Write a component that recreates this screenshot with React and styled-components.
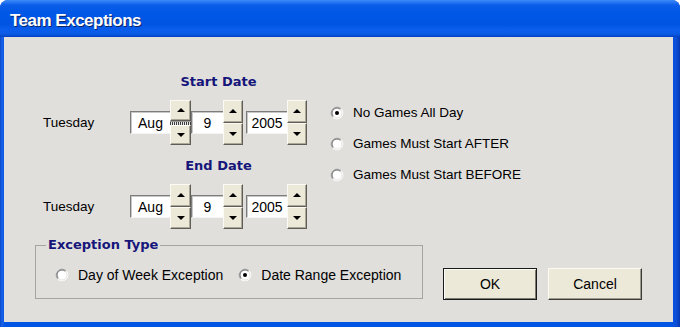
import React from 'react';
import styled, { createGlobalStyle } from 'styled-components';

const GlobalStyle = createGlobalStyle`
  html, body { margin: 0; padding: 0; background: #fff; }
  body {
    width: 680px; height: 327px; overflow: hidden;
    font-family: "Liberation Sans", Arial, sans-serif;
  }
`;

const Window = styled.div`
  width: 680px;
  height: 327px;
  display: flex;
  flex-direction: column;
  background: linear-gradient(to right, #0a48c8 0, #1a62e8 2px, #0055e5 5px, #0055e5 670px, #0b4fd8 676px, #0638b0 680px);
  border-radius: 8px 8px 0 0;
  overflow: hidden;
`;

const TitleBar = styled.div`
  height: 37px;
  flex: none;
  box-sizing: border-box;
  display: flex;
  align-items: center;
  padding: 5px 0 0 10px;
  background: linear-gradient(to bottom,
    #3d8af7 0px, #2a7af5 2px, #0b5ee9 5px, #0058e6 12px,
    #0054e2 24px, #0a5eeb 30px, #0b5ae4 34px, #0041c0 37px);
  color: #fff;
  font: bold 17px "Liberation Sans", Arial, sans-serif;
  letter-spacing: -0.5px;
  text-shadow: 1px 1px 0 #0a246a;
`;

const Body = styled.div`
  flex: 1;
  margin: 0 7px 5px 4px;
  background: #e0dfdc;
  box-sizing: border-box;
  padding-top: 37px;
  display: flex;
  flex-direction: column;
  font-size: 13.5px;
  color: #000;
`;

const TopRow = styled.div`
  display: flex;
  padding-left: 39px;
`;

const DateColumn = styled.div`
  width: 287px;
  flex: none;
  display: flex;
  flex-direction: column;
`;

const DateSection = styled.div`
  margin-top: ${p => p.$top || 0}px;
  display: flex;
  flex-direction: column;
`;

const SectionHeader = styled.div`
  margin-left: 87px;
  width: 177px;
  text-align: center;
  font: bold 13px "DejaVu Sans", Verdana, sans-serif;
  line-height: 16px;
  color: #15157a;
  margin-bottom: 10px;
`;

const DateRow = styled.div`
  display: flex;
  align-items: center;
  height: 45px;
`;

const DayLabel = styled.div`
  width: 87px;
  flex: none;
`;

const SpinGroup = styled.div`
  display: flex;
  align-items: center;
`;

const Field = styled.div`
  width: ${p => p.$w}px;
  margin-left: ${p => p.$gap || 0}px;
  height: 23px;
  box-sizing: border-box;
  background: #fff;
  border-style: solid;
  border-width: 1px 0 1px 1px;
  border-color: #7c7c7c #fff #f4f4f4 #7c7c7c;
  box-shadow: inset 1px 1px 0 #c8c8c8;
  display: flex;
  align-items: center;
  justify-content: center;
  font-size: 14px;
  line-height: 1;
`;

const SpinStack = styled.div`
  width: ${p => p.$w}px;
  height: 45px;
  display: flex;
  flex-direction: column;
`;

const SpinButton = styled.div`
  flex: 1;
  box-sizing: border-box;
  background: #ece9d8;
  border: 1px solid;
  border-color: #fbfaf5 #5f5d55 #5f5d55 #fbfaf5;
  box-shadow: inset -1px -1px 0 #aca899;
  display: flex;
  align-items: center;
  justify-content: center;
`;

const FocusBand = styled.div`
  height: 4px;
  flex: none;
  background:
    repeating-linear-gradient(90deg, #3c3c3c 0 1px, #e8e8e8 1px 2px);
  border-top: 1px solid #9a9a9a;
  box-sizing: border-box;
`;

const Arrow = ({ down }) => (
  <svg width="8" height="4" viewBox="0 0 8 4">
    {down
      ? <polygon points="0,0 8,0 4,4" fill="#000" />
      : <polygon points="0,4 4,0 8,4" fill="#000" />}
  </svg>
);

const Spinner = ({ w, focused }) => (
  <SpinStack $w={w}>
    <SpinButton><Arrow /></SpinButton>
    {focused && <FocusBand />}
    <SpinButton><Arrow down /></SpinButton>
  </SpinStack>
);

const DateSpinners = ({ focused }) => (
  <SpinGroup>
    <Field $w={40}>Aug</Field>
    <Spinner w={21} focused={focused} />
    <Field $w={32}>9</Field>
    <Spinner w={20} />
    <Field $w={41} $gap={3}>2005</Field>
    <Spinner w={20} />
  </SpinGroup>
);

const RadioColumn = styled.div`
  margin-top: 23px;
  display: flex;
  flex-direction: column;
`;

const RadioOption = styled.label`
  display: flex;
  align-items: center;
  gap: 9px;
  height: ${p => p.$h || 31}px;
  margin-right: ${p => p.$after || 0}px;
  white-space: nowrap;
`;

const RadioSvg = styled.svg`
  width: 14px;
  height: 14px;
  flex: none;
`;

const RadioMark = ({ checked }) => (
  <RadioSvg viewBox="0 0 14 14">
    <circle cx="7" cy="7" r="6" fill="#fff" />
    <path d="M2.76 11.24 A6 6 0 0 1 11.24 2.76" stroke="#a6a6a6" fill="none" strokeWidth="1" />
    <path d="M3.46 10.54 A5 5 0 0 1 10.54 3.46" stroke="#6c6c6c" fill="none" strokeWidth="1" />
    <path d="M11.24 2.76 A6 6 0 0 1 2.76 11.24" stroke="#ffffff" fill="none" strokeWidth="1" />
    <path d="M10.54 3.46 A5 5 0 0 1 3.46 10.54" stroke="#e4e2dc" fill="none" strokeWidth="1" />
    {checked && <circle cx="7" cy="7" r="2" fill="#000" />}
  </RadioSvg>
);

const BottomRow = styled.div`
  display: flex;
  align-items: flex-end;
  padding-left: 31px;
  margin-top: 8px;
`;

const GroupBox = styled.fieldset`
  margin: 0 0 1px 0;
  width: 388px;
  box-sizing: border-box;
  min-inline-size: 0;
  padding: 14px 10px 15px 10px;
  border: 1px solid #a4a4a4;
`;

const Legend = styled.legend`
  padding: 0 2px;
  font: bold 13px "DejaVu Sans", Verdana, sans-serif;
  line-height: 16px;
  color: #15157a;
`;

const GroupRow = styled.div`
  display: flex;
  align-items: center;
  margin-left: 9px;
  font-size: 14px;
`;

const ButtonRow = styled.div`
  display: flex;
  gap: 11px;
  margin-left: 20px;
`;

const DialogButton = styled.button`
  width: 94px;
  height: 32px;
  box-sizing: border-box;
  padding: 0;
  background: #ece9d8;
  font: 14px "Liberation Sans", Arial, sans-serif;
  color: #000;
  border: 1px solid;
  border-color: ${p => p.$default ? '#1a1a1a' : '#fbfaf5 #3c3b36 #3c3b36 #fbfaf5'};
  box-shadow: ${p => p.$default
    ? 'inset 1px 1px 0 #fbfaf5, inset -1px -1px 0 #7d7b70'
    : 'inset -1px -1px 0 #9d9b90'};
`;

export default function App() {
  return (
    <>
      <GlobalStyle />
      <Window>
        <TitleBar>Team Exceptions</TitleBar>
        <Body>
          <TopRow>
            <DateColumn>
              <DateSection>
                <SectionHeader>Start Date</SectionHeader>
                <DateRow>
                  <DayLabel>Tuesday</DayLabel>
                  <DateSpinners focused />
                </DateRow>
              </DateSection>
              <DateSection $top={13}>
                <SectionHeader>End Date</SectionHeader>
                <DateRow>
                  <DayLabel>Tuesday</DayLabel>
                  <DateSpinners />
                </DateRow>
              </DateSection>
            </DateColumn>
            <RadioColumn>
              <RadioOption><RadioMark checked />No Games All Day</RadioOption>
              <RadioOption><RadioMark />Games Must Start AFTER</RadioOption>
              <RadioOption><RadioMark />Games Must Start BEFORE</RadioOption>
            </RadioColumn>
          </TopRow>
          <BottomRow>
            <GroupBox>
              <Legend>Exception Type</Legend>
              <GroupRow>
                <RadioOption $h={16} $after={15}><RadioMark />Day of Week Exception</RadioOption>
                <RadioOption $h={16}><RadioMark checked />Date Range Exception</RadioOption>
              </GroupRow>
            </GroupBox>
            <ButtonRow>
              <DialogButton $default>OK</DialogButton>
              <DialogButton>Cancel</DialogButton>
            </ButtonRow>
          </BottomRow>
        </Body>
      </Window>
    </>
  );
}
